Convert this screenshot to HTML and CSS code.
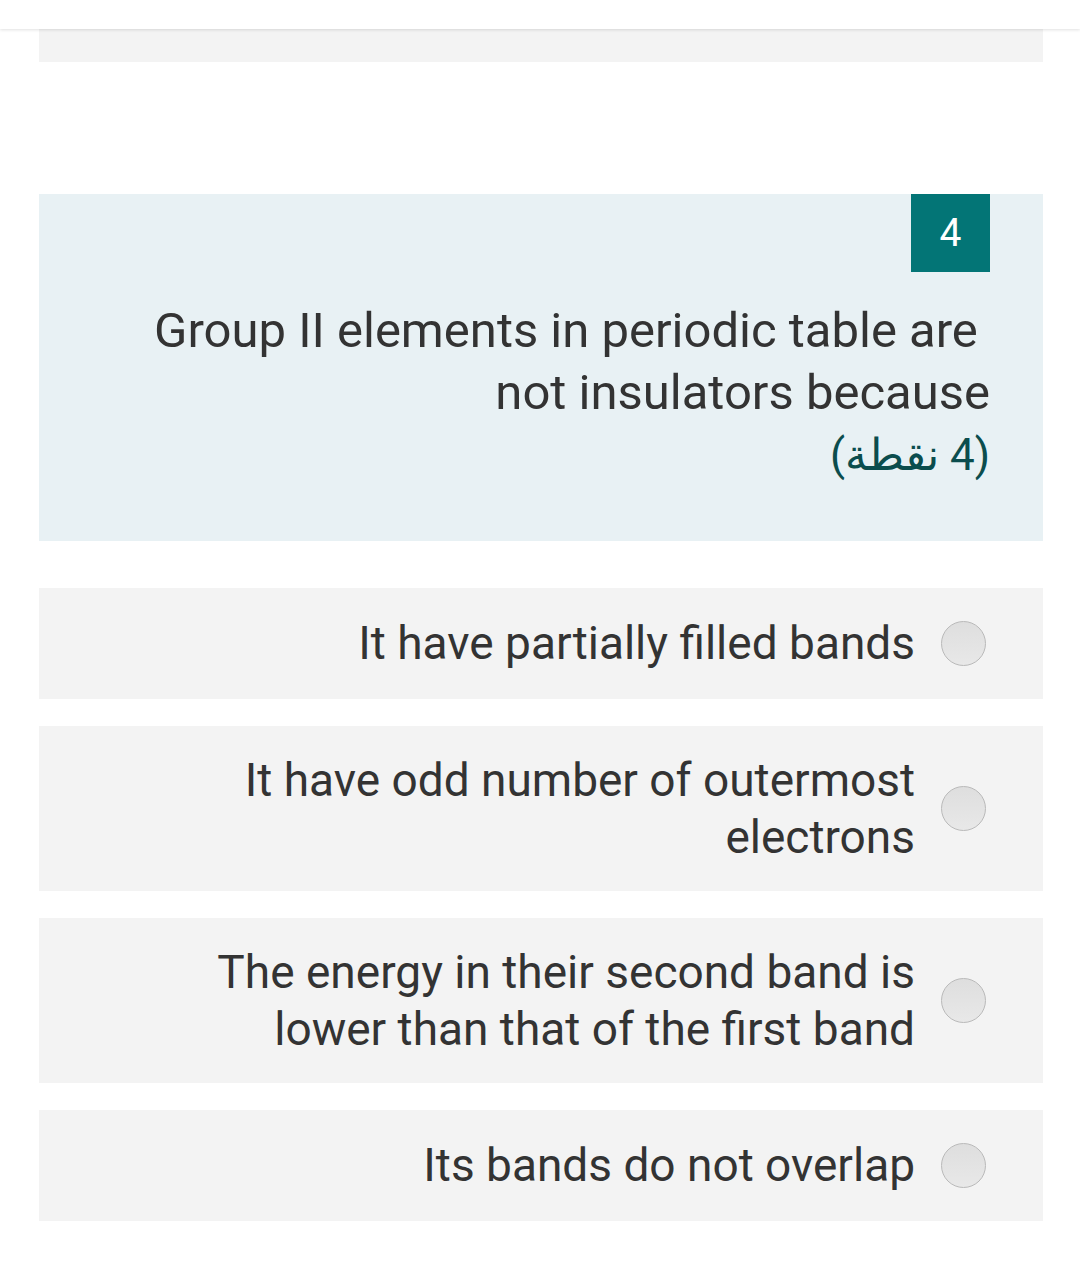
FILE: index.html
```html
<!DOCTYPE html>
<html>
<head>
<meta charset="utf-8">
<link rel="stylesheet" href="styles.css">
</head>
<body>
<div class="topbar"></div>
<div class="prev-card"></div>
<div class="question">
  <div class="badge-row"><div class="badge">4</div></div>
  <div class="q-text">Group II elements in periodic table are&nbsp;<br>not insulators because</div>
  <div class="points" dir="rtl">(4 نقطة)</div>
</div>
<div class="options">
  <div class="option"><span class="opt-text">It have partially filled bands</span><span class="radio"></span></div>
  <div class="option tall"><span class="opt-text">It have odd number of outermost electrons</span><span class="radio"></span></div>
  <div class="option tall"><span class="opt-text">The energy in their second band is lower than that of the first band</span><span class="radio"></span></div>
  <div class="option"><span class="opt-text">Its bands do not overlap</span><span class="radio"></span></div>
</div>
</body>
</html>
```
FILE: styles.css
```css
html, body {
  margin: 0;
  padding: 0;
  background: #ffffff;
  font-family: Roboto, "Noto Sans", sans-serif;
}
.topbar {
  position: relative;
  height: 29px;
  background: #ffffff;
  box-shadow: 0 1px 3px rgba(0,0,0,0.12);
  z-index: 2;
}
.prev-card {
  margin: 0 37px 0 39px;
  height: 33px;
  background: #f3f3f3;
}
.question {
  margin: 132px 37px 0 39px;
  background: #e8f1f4;
  padding: 0 53px 55px 40px;
  text-align: right;
  color: #333333;
}
.badge-row {
  display: flex;
  justify-content: flex-end;
}
.badge {
  width: 79px;
  height: 78px;
  background: #037576;
  color: #ffffff;
  font-size: 39px;
  display: flex;
  align-items: center;
  justify-content: center;
}
.q-text {
  margin-top: 28px;
  font-size: 49px;
  line-height: 62px;
}
.points {
  font-size: 44px;
  line-height: 62px;
  height: 62px;
  color: #0b4d4d;
  text-align: right;
}
.options {
  margin: 47px 37px 0 39px;
  display: flex;
  flex-direction: column;
  gap: 27px;
}
.option {
  background: #f3f3f3;
  display: flex;
  align-items: center;
  justify-content: flex-end;
  gap: 26px;
  padding: 0 57px 0 60px;
  min-height: 111px;
}
.option.tall {
  min-height: 165px;
}
.opt-text {
  font-size: 46px;
  line-height: 57px;
  color: #333333;
  text-align: right;
  max-width: 720px;
}
.radio {
  flex: none;
  width: 43px;
  height: 43px;
  border-radius: 50%;
  border: 1px solid #b9b9b9;
  background: linear-gradient(#dedede, #e8e8e8);
}
```
